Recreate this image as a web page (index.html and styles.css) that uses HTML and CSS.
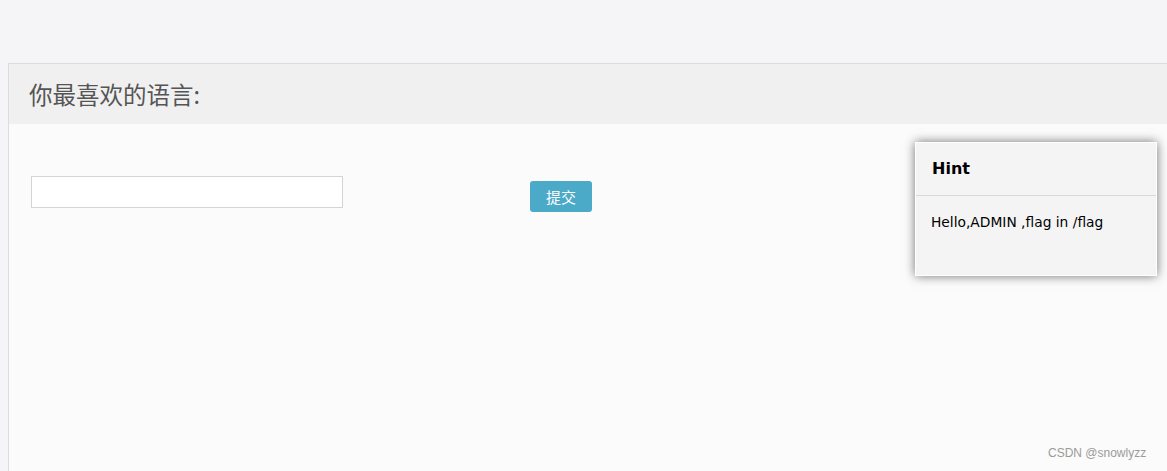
FILE: index.html
```html
<!DOCTYPE html>
<html lang="zh">
<head>
<meta charset="utf-8">
<title>Hint</title>
<link rel="stylesheet" href="styles.css">
</head>
<body>
<div class="top"></div>
<div class="panel">
  <div class="panel-head">你最喜欢的语言:</div>
  <div class="panel-body">
    <form class="form">
      <input class="text-input" type="text">
      <button class="btn" type="button">提交</button>
    </form>
  </div>
</div>
<div class="hint">
  <div class="hint-title">Hint</div>
  <div class="hint-body">Hello,ADMIN ,flag in /flag</div>
</div>
<div class="watermark">CSDN @snowlyzz</div>
</body>
</html>
```

FILE: styles.css
```css
html, body {
  margin: 0;
  padding: 0;
  height: 100%;
  overflow: hidden;
}
body {
  background: #f5f5f7;
  font-family: "Noto Sans CJK SC", "DejaVu Sans", sans-serif;
  position: relative;
}
.top {
  height: 63px;
}
.panel {
  margin-left: 8px;
  border-left: 1px solid #dcdcdc;
  border-top: 1px solid #dcdcdc;
  background: #fbfbfb;
  height: 420px;
}
.panel-head {
  height: 60px;
  background: #f0f0f0;
  box-sizing: border-box;
  padding-left: 20px;
  display: flex;
  align-items: center;
  font-family: "Noto Sans CJK SC", sans-serif;
  font-size: 23.5px;
  color: #555;
}
.panel-body {
  padding: 52px 0 0 22px;
}
.form {
  display: flex;
  align-items: flex-start;
}
.text-input {
  width: 312px;
  height: 32px;
  box-sizing: border-box;
  border: 1px solid #d4d4d4;
  background: #fff;
  margin: 0;
  padding: 0 6px;
}
.btn {
  margin: 5px 0 0 187px;
  width: 62px;
  height: 31px;
  border: none;
  border-radius: 3px;
  background: #4aaac8;
  color: #fff;
  font-family: "Noto Sans CJK SC", sans-serif;
  font-size: 15px;
  padding: 0;
  line-height: 31px;
}
.hint {
  position: absolute;
  left: 915px;
  top: 142px;
  width: 242px;
  height: 134px;
  box-sizing: border-box;
  background: #f4f4f4;
  border: 1px solid #fff;
  box-shadow: 0 0 10px rgba(0, 0, 0, 0.55);
  font-family: "DejaVu Sans", Verdana, sans-serif;
  color: #000;
}
.hint-title {
  height: 53px;
  box-sizing: border-box;
  padding: 16px 0 0 16px;
  font-size: 16px;
  font-weight: bold;
  border-bottom: 1px solid #d8d8d8;
}
.hint-body {
  padding: 18px 0 0 15px;
  font-size: 13.8px;
}
.watermark {
  position: absolute;
  left: 1048px;
  top: 446px;
  font-family: "Liberation Sans", Arial, sans-serif;
  font-size: 12px;
  color: #9a9a9a;
}
```
